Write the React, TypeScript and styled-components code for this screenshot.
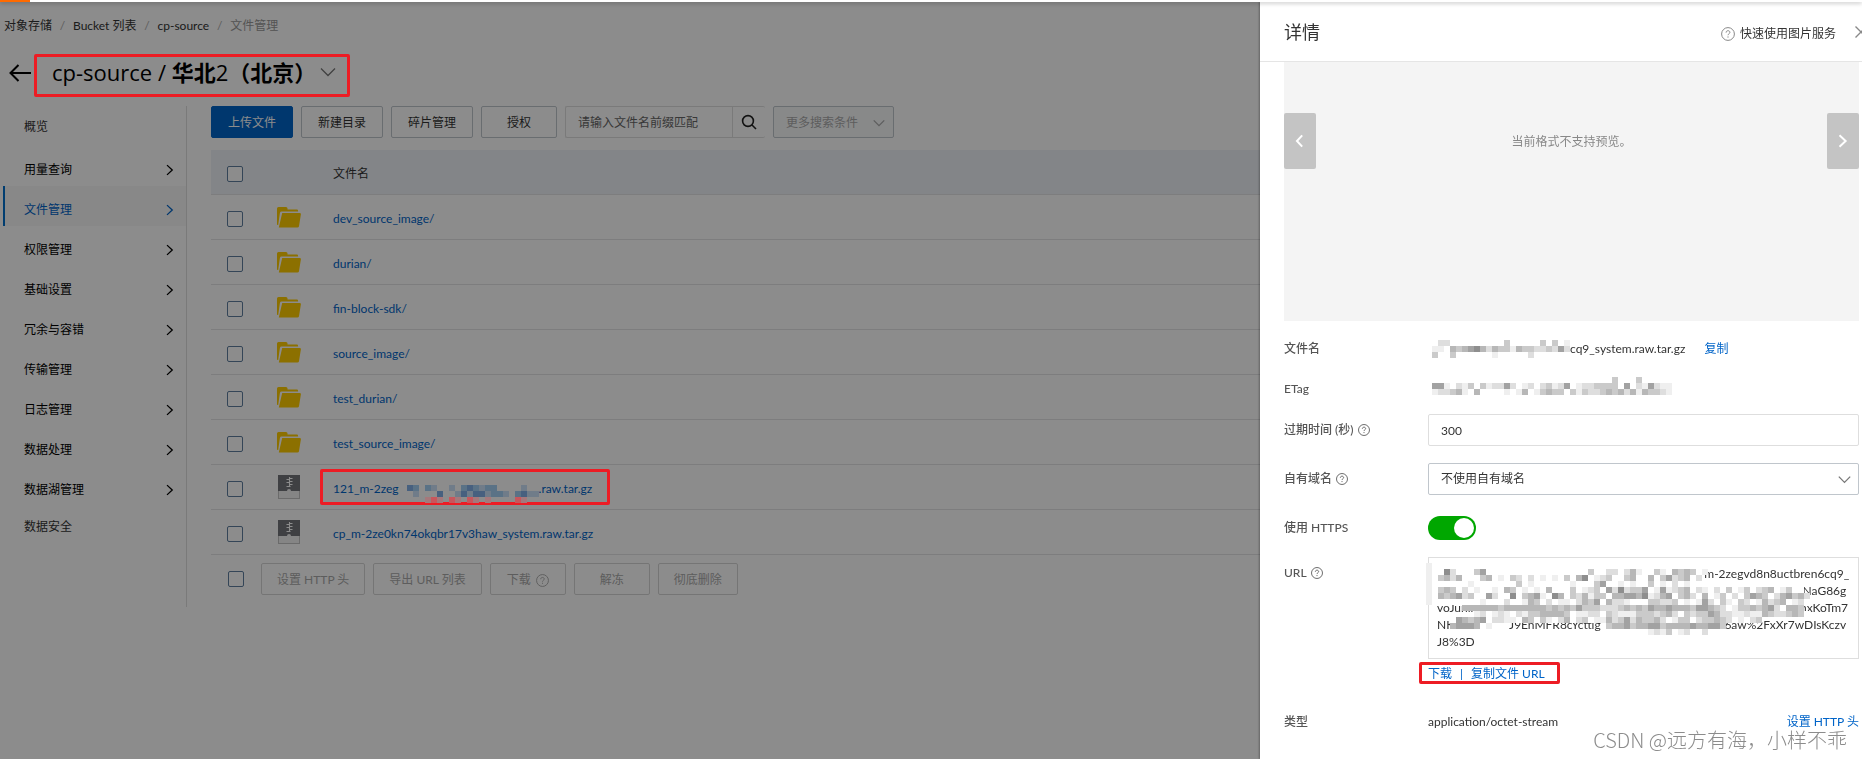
import React from "react";
import styled, { createGlobalStyle, css } from "styled-components";

const GlobalStyle = createGlobalStyle`
  * { box-sizing: border-box; }
  body {
    margin: 0;
    background: #fff;
    color: #333;
    font: 400 12px/20px Lato, "Noto Sans CJK SC", sans-serif;
    overflow: hidden;
  }
  button, input, select, textarea { font: inherit; color: inherit; margin: 0; }
  a { color: #0064c8; text-decoration: none; }
`;

/* ---------- icons ---------- */

type Dir = "down" | "left" | "right";
const chevronPaths: Record<Dir, string> = {
  down: "M1 4.5 8 11.5 15 4.5",
  left: "M10.5 1.5 4.5 8l6 6.5",
  right: "M4 1.5 11 8 4 14.5",
};

const Chevron = ({ dir, size = 12, weight = 1.3 }: { dir: Dir; size?: number; weight?: number }) => (
  <svg width={size} height={size} viewBox="0 0 16 16" fill="none" stroke="currentColor" strokeWidth={weight * (16 / size)}>
    <path d={chevronPaths[dir]} />
  </svg>
);

const HelpIcon = ({ size = 12 }: { size?: number }) => (
  <svg width={size} height={size} viewBox="0 0 14 14" fill="none" stroke="currentColor">
    <circle cx="7" cy="7" r="6.4" />
    <path d="M5.1 5.6c0-1.2.8-1.9 1.9-1.9s1.9.7 1.9 1.7c0 1.3-1.9 1.4-1.9 2.8" />
    <path d="M7 9.4v1.2" />
  </svg>
);

const BackIcon = () => (
  <svg width="22" height="18" viewBox="0 0 22 18" fill="none" stroke="#000" strokeWidth="2">
    <path d="M9.5 1 1.5 9l8 8M1.5 9H22" />
  </svg>
);

const SearchIcon = () => (
  <svg width="16" height="16" viewBox="0 0 16 16" fill="none" stroke="#222" strokeWidth="1.6">
    <circle cx="7" cy="7" r="5.4" />
    <path d="m11 11 4 4" />
  </svg>
);

const FolderIcon = () => (
  <svg width="24" height="21" viewBox="0 0 24 21" fill="#ffcc00">
    <path d="M0 1.5Q0 0 1.5 0H9q1.5 0 1.5 1.5V2.6h9.3q1.3 0 1.3 1.3V4.6H4.6Q3.2 4.6 2.9 6L1.2 18H.6Q0 18 0 17Z" />
    <path d="M5.2 5.9H22.6q1.5 0 1.3 1.4L22 19.2q-.2 1.4-1.6 1.4H1.8Z" />
  </svg>
);

const ArchiveIcon = () => (
  <svg width="24" height="24" viewBox="-1 0 24 24">
    <path fill="#c4c4c4" d="M0 0h22v24H0z" />
    <path fill="#73757a" d="M0 0h22v16H0z" />
    <path fill="#f2f2f2" d="M1 16h20v7H1z" />
    <path fill="#f2f2f2" d="M9 16a2 2 0 0 1 4 0z" />
    <path fill="none" stroke="#fff" strokeWidth="1.1" d="M11.5 2v10M8.5 4.5h3M11.5 3.5h3M11.5 6.5h3M8.5 7.5h3M11.5 9.5h3M8.5 11.5h4" />
  </svg>
);

const CloseIcon = () => (
  <svg width="14" height="14" viewBox="0 0 14 14" fill="none" stroke="#888" strokeWidth="1.4">
    <path d="m1.5 1.5 11 11m0-11-11 11" />
  </svg>
);

/* ---------- mosaic that hides private text ---------- */

const CELL = 6;
const shades: Record<string, string> = {
  "0": "#ffffff", "1": "#efefef", "2": "#dedede", "3": "#cacaca", "4": "#b7b7b7", "5": "#a2a2a2", "6": "#8e8e8e",
  a: "#47607f", b: "#707c89", e: "#5a7286", d: "#c8565c", g: "#a5787b",
};

const Mosaic = ({ rows, className }: { rows: string[]; className?: string }) => {
  const width = Math.max(...rows.map((r) => r.length)) * CELL;
  const height = rows.length * CELL;
  return (
    <svg className={className} width={width} height={height} shapeRendering="crispEdges" aria-hidden="true">
      {rows.flatMap((row, y) =>
        [...row].map((c, x) =>
          shades[c] ? <rect key={`${x}-${y}`} x={x * CELL} y={y * CELL} width={CELL} height={CELL} fill={shades[c]} /> : null
        )
      )}
    </svg>
  );
};

const linkMosaic = [
  "ae.eb..b.eaebee....b",
  ".b...a..babaabeeb.eabb",
  "...gdg.dg.dg.g....dg",
];
const nameMosaic = [
  ".22.........3.....3.3.1",
  "11.43456424331433223252",
  "3..3......1.....2......",
];
const etagMosaic = [
  "..............................3...3......",
  "551.213.312252.12.23125.1223333.5.215211",
  "122341.4....1.14.13433.31322343424143321",
  "",
];
const urlMosaic = [
  "1",
  "10062000350000000000000000030022024100310434301",
  "1034240003401032020101030460123003400403523402",
  "1000000100000003010000001000350010100301020100",
  "103430201001043010104000301230526233501512340210203013023401300",
  "1043452300520060345106403241330445546124503420401302035430245342",
  "1000000001000200143020110243504221000332230101520310320142340120",
  "......444444344444443434353332223434354454443554320133434520443",
  "........12012102133444430112203211133323420323354221121143223430",
  "....0543450221104303102402301142352433420133023343201023",
  "....45554.1...................34453445534444544553",
  ".....................................1213012..2",
];

/* ---------- red marker frames ---------- */

const marked = css`
  position: relative;
  &::after {
    content: "";
    position: absolute;
    z-index: 2;
    border: 3px solid #ed1c24;
    border-radius: 2px;
    pointer-events: none;
  }
`;

/* ---------- page ---------- */

const TopStrip = styled.div`
  position: relative;
  z-index: 4;
  height: 2px;
  background: linear-gradient(90deg, #ff6a00 30px, #fff 30px);
  box-shadow: 0 1px 4px rgba(0, 0, 0, 0.35);
`;

const Mask = styled.div`
  position: fixed;
  inset: 0;
  z-index: 1;
  background: rgba(0, 0, 0, 0.45);
`;

const Breadcrumb = styled.nav`
  display: flex;
  padding: 14px 4px 0;
  a { color: #333; }
`;
const Slash = styled.span`
  width: 21px;
  text-align: center;
  color: #aaa;
`;
const Current = styled.span`color: #999;`;

const TitleBar = styled.header`
  display: flex;
  align-items: center;
  margin-top: 18px;
  padding-left: 9px;
`;
const BackButton = styled.button`
  display: flex;
  padding: 0 0 6px;
  border: 0;
  background: none;
`;
const BucketSwitch = styled.div`
  ${marked}
  display: flex;
  align-items: center;
  gap: 4px;
  height: 43px;
  margin-left: 3px;
  padding: 0 14px 8px 18px;
  color: #777;
  &::after { inset: 0; }
`;
const Title = styled.h1`
  margin: 0;
  color: #000;
  font: 500 22px/32px "Open Sans", "Noto Sans CJK SC", sans-serif;
  b { font-weight: 700; }
`;

const Body = styled.div`
  display: flex;
  align-items: flex-start;
  margin-top: 9px;
`;

const Sidebar = styled.nav`
  flex: none;
  width: 187px;
  padding: 0 0 61px 3px;
  border-right: 1px solid #dedede;
`;
const SideItem = styled.a<{ $sub?: boolean; $active?: boolean }>`
  display: flex;
  align-items: center;
  justify-content: space-between;
  height: 40px;
  padding: ${(p) => (p.$sub ? "7px 10px 0 19px" : "2px 10px 0 21px")};
  border-left: ${(p) => (p.$sub ? "2px solid transparent" : "0")};
  color: ${(p) => (p.$sub ? "#000" : "#333")};
  ${(p) => p.$active && css`
    color: #0064c8;
    background: #f7f7f7;
    border-left-color: #0070cc;
  `}
`;

const Content = styled.main`
  flex: 1;
  min-width: 0;
  padding-left: 24px;
`;

const Toolbar = styled.div`
  display: flex;
  gap: 8px;
`;
const Button = styled.button<{ $primary?: boolean }>`
  display: flex;
  align-items: center;
  justify-content: center;
  gap: 5px;
  height: 32px;
  min-width: 76px;
  padding: 2px 16px 0;
  border: 1px solid #c0c6cc;
  border-radius: 2px;
  background: #fff;
  white-space: nowrap;
  ${(p) => p.$primary && css`
    background: #0064c8;
    border-color: #0064c8;
    color: #fff;
  `}
  &:disabled { color: #aaa; border-color: #d6d6d6; }
`;
const SearchBox = styled.form`
  display: flex;
  width: 200px;
  height: 32px;
  border: 1px solid #dedede;
  border-right: 0;
  border-radius: 2px;
  input {
    flex: 1;
    min-width: 0;
    padding: 2px 12px 0;
    border: 0;
    background: none;
  }
  input::placeholder { color: #666; opacity: 1; }
  button {
    width: 33px;
    padding: 0;
    border: 0;
    border-left: 1px solid #dedede;
    background: none;
  }
  svg { display: block; margin: auto; }
`;
const FilterButton = styled(Button)`
  justify-content: space-between;
  width: 121px;
  padding: 2px 8px 0 12px;
  &:disabled { border-color: #c0c6cc; background: #f7f9fa; }
`;

const Table = styled.table`
  width: 100%;
  margin-top: 12px;
  border-collapse: separate;
  border-spacing: 0;
  table-layout: fixed;
  th, td {
    height: 45px;
    padding: 4px 0 0;
    border-bottom: 1px solid #e3e4e6;
    text-align: left;
    font-weight: 400;
    vertical-align: middle;
  }
  td:nth-child(2) { padding: 0; }
  th { background: #eff3f8; }
  svg { display: block; }
`;
const CheckCell = styled.col`width: 66px;`;
const IconCell = styled.col`width: 56px;`;
const Check = styled.input.attrs({ type: "checkbox" })`
  appearance: none;
  display: block;
  flex: none;
  width: 16px;
  height: 16px;
  margin-left: 16px;
  border: 1px solid #5f7f9f;
  border-radius: 2px;
  background: #fff;
`;
const FileLink = styled.a<{ $marked?: boolean }>`
  display: flex;
  align-items: center;
  width: fit-content;
  height: 20px;
  ${(p) => p.$marked && css`
    ${marked}
    &::after { inset: -10px -18px -6px -13px; }
  `}
`;
const LinkMosaic = styled(Mosaic)`
  position: relative;
  z-index: 3;
  margin: 10px 0 0 8px;
`;
const BatchBar = styled.div`
  display: flex;
  align-items: center;
  gap: 8px;
  padding: 8px 0 0 1px;
`;
const BatchCheck = styled(Check)`margin-right: 9px;`;
const BatchButton = styled(Button)`padding: 2px 15px 0;`;

/* ---------- drawer ---------- */

const Drawer = styled.aside`
  position: fixed;
  top: 2px;
  right: -8px;
  bottom: 0;
  z-index: 3;
  width: 610px;
  background: #fff;
  box-shadow: -1px 0 2px rgba(0, 0, 0, 0.3);
`;
const DrawerHead = styled.header`
  display: flex;
  align-items: center;
  height: 60px;
  padding-left: 24px;
  border-bottom: 1px solid #e5e5e5;
`;
const DrawerTitle = styled.h2`
  flex: 1;
  margin: 0;
  font-size: 18px;
  line-height: 24px;
  font-weight: 400;
`;
const HelpLink = styled.a`
  display: flex;
  align-items: center;
  gap: 5px;
  padding-top: 4px;
  color: #333;
  svg { color: #888; }
`;
const CloseButton = styled.button`
  display: flex;
  margin-left: 18px;
  padding: 0 2px 0 0;
  border: 0;
  background: none;
`;
const DrawerBody = styled.div`padding: 0 11px 0 24px;`;
const Preview = styled.div`
  display: flex;
  align-items: flex-start;
  justify-content: space-between;
  height: 259px;
  padding-top: 51px;
  background: #f4f4f4;
  color: #888;
`;
const PageButton = styled.button`
  display: flex;
  align-items: center;
  justify-content: center;
  width: 32px;
  height: 56px;
  padding: 0;
  border: 0;
  border-radius: 2px;
  background: #c4c4c4;
  color: #fff;
`;
const PreviewNote = styled.p`
  margin: 0;
  line-height: 58px;
`;
const Details = styled.div`padding-top: 8px;`;
const Field = styled.div<{ $height?: number; $after?: number; $top?: boolean }>`
  display: grid;
  grid-template-columns: 144px 1fr;
  align-items: ${(p) => (p.$top ? "start" : "center")};
  min-height: ${(p) => p.$height ?? 32}px;
  margin-bottom: ${(p) => p.$after ?? 0}px;
`;
const Label = styled.label`
  display: flex;
  align-items: center;
  gap: 4px;
  min-height: 32px;
  color: #555;
  font-weight: 500;
`;
const Value = styled.div`
  display: flex;
  align-items: center;
`;
const MaskedValue = styled(Value)`padding-left: 4px;`;
const CopyLink = styled.a`margin-left: 19px;`;
const TextInput = styled.input`
  width: 100%;
  height: 32px;
  padding: 0 12px;
  border: 1px solid #dedede;
  border-radius: 2px;
`;
const SelectBox = styled.div`
  position: relative;
  color: #777;
  select {
    appearance: none;
    width: 100%;
    height: 32px;
    padding: 0 12px;
    border: 1px solid #c0c6cc;
    border-radius: 2px;
    background: #fff;
    color: #333;
  }
  svg {
    position: absolute;
    top: 10px;
    right: 8px;
    pointer-events: none;
  }
`;
const Switch = styled.input.attrs({ type: "checkbox", role: "switch" })`
  appearance: none;
  display: flex;
  justify-content: flex-end;
  width: 48px;
  height: 24px;
  padding: 2px;
  border-radius: 12px;
  background: #00a700;
  &::before {
    content: "";
    width: 20px;
    height: 20px;
    border-radius: 50%;
    background: #fff;
  }
`;
const UrlBox = styled.div`
  position: relative;
  height: 102px;
`;
const UrlText = styled.textarea`
  display: block;
  width: 100%;
  height: 102px;
  padding: 7px 8px;
  border: 1px solid #dedede;
  line-height: 17px;
  white-space: pre;
  overflow: hidden;
  resize: none;
`;
const UrlMosaic = styled(Mosaic)`
  position: absolute;
  top: 6px;
  left: -2px;
`;
const UrlActions = styled.div`
  ${marked}
  display: inline-flex;
  gap: 8px;
  margin-top: 5px;
  color: #0064c8;
  &::after { inset: -2px -15px 0 -9px; }
`;
const TypeValue = styled(Value)`justify-content: space-between;`;
const Watermark = styled.p`
  position: fixed;
  right: 15px;
  bottom: 5px;
  z-index: 5;
  margin: 0;
  color: #8c8c8c;
  font: 300 20px/28px "Noto Sans CJK SC", sans-serif;
`;

/* ---------- data ---------- */

const sections = ["用量查询", "文件管理", "权限管理", "基础设置", "冗余与容错", "传输管理", "日志管理", "数据处理", "数据湖管理"];
const folders = ["dev_source_image/", "durian/", "fin-block-sdk/", "source_image/", "test_durian/", "test_source_image/"];

const gap = (n: number) => " ".repeat(n);
const urlValue = [
  gap(87) + "m-2zegvd8n8uctbren6cq9_",
  gap(119) + "NaG86g",
  "voJunim" + gap(104) + "nxKoTm7",
  "NK" + gap(18) + "J9EnMFR8cYcttlg" + gap(38) + "16aw%2FxXr7wDIsKczv",
  "J8%3D",
].join("\n");

export default function App() {
  return (
    <>
      <GlobalStyle />
      <TopStrip />
      <Breadcrumb>
        <a href="#oss">对象存储</a>
        <Slash>/</Slash>
        <a href="#buckets">Bucket 列表</a>
        <Slash>/</Slash>
        <a href="#cp-source">cp-source</a>
        <Slash>/</Slash>
        <Current>文件管理</Current>
      </Breadcrumb>
      <TitleBar>
        <BackButton aria-label="返回"><BackIcon /></BackButton>
        <BucketSwitch>
          <Title>cp-source / <b>华北</b>2<b>（北京）</b></Title>
          <Chevron dir="down" size={16} />
        </BucketSwitch>
      </TitleBar>

      <Body>
        <Sidebar>
          <SideItem href="#overview">概览</SideItem>
          {sections.map((name) => (
            <SideItem key={name} href="#section" $sub $active={name === "文件管理"}>
              {name}
              <Chevron dir="right" />
            </SideItem>
          ))}
          <SideItem href="#security">数据安全</SideItem>
        </Sidebar>

        <Content>
          <Toolbar>
            <Button $primary>上传文件</Button>
            <Button>新建目录</Button>
            <Button>碎片管理</Button>
            <Button>授权</Button>
            <SearchBox>
              <input aria-label="搜索文件" placeholder="请输入文件名前缀匹配" />
              <button type="button" aria-label="搜索"><SearchIcon /></button>
            </SearchBox>
            <FilterButton disabled>
              更多搜索条件
              <Chevron dir="down" />
            </FilterButton>
          </Toolbar>

          <Table>
            <colgroup>
              <CheckCell />
              <IconCell />
              <col />
            </colgroup>
            <thead>
              <tr>
                <th><Check aria-label="全选" /></th>
                <th />
                <th>文件名</th>
              </tr>
            </thead>
            <tbody>
              {folders.map((name) => (
                <tr key={name}>
                  <td><Check aria-label={name} /></td>
                  <td><FolderIcon /></td>
                  <td><FileLink href="#folder">{name}</FileLink></td>
                </tr>
              ))}
              <tr>
                <td><Check aria-label="121_m-2zeg" /></td>
                <td><ArchiveIcon /></td>
                <td>
                  <FileLink href="#file" $marked>
                    121_m-2zeg<LinkMosaic rows={linkMosaic} />.raw.tar.gz
                  </FileLink>
                </td>
              </tr>
              <tr>
                <td><Check aria-label="cp_m-2ze0kn74okqbr17v3haw" /></td>
                <td><ArchiveIcon /></td>
                <td><FileLink href="#file">cp_m-2ze0kn74okqbr17v3haw_system.raw.tar.gz</FileLink></td>
              </tr>
            </tbody>
          </Table>
          <BatchBar>
            <BatchCheck aria-label="选择全部文件" />
            <BatchButton disabled>设置 HTTP 头</BatchButton>
            <BatchButton disabled>导出 URL 列表</BatchButton>
            <BatchButton disabled>下载 <HelpIcon size={13} /></BatchButton>
            <BatchButton disabled>解冻</BatchButton>
            <BatchButton disabled>彻底删除</BatchButton>
          </BatchBar>
        </Content>
      </Body>

      <Mask />

      <Drawer>
        <DrawerHead>
          <DrawerTitle>详情</DrawerTitle>
          <HelpLink href="#image-service"><HelpIcon size={14} />快速使用图片服务</HelpLink>
          <CloseButton aria-label="关闭"><CloseIcon /></CloseButton>
        </DrawerHead>
        <DrawerBody>
          <Preview>
            <PageButton aria-label="上一个"><Chevron dir="left" size={14} weight={2} /></PageButton>
            <PreviewNote>当前格式不支持预览。</PreviewNote>
            <PageButton aria-label="下一个"><Chevron dir="right" size={14} weight={2} /></PageButton>
          </Preview>
          <Details>
            <Field $height={40}>
              <Label as="span">文件名</Label>
              <MaskedValue>
                <Mosaic rows={nameMosaic} />
                cq9_system.raw.tar.gz
                <CopyLink href="#copy">复制</CopyLink>
              </MaskedValue>
            </Field>
            <Field $height={40} $after={5}>
              <Label as="span">ETag</Label>
              <MaskedValue><Mosaic rows={etagMosaic} /></MaskedValue>
            </Field>
            <Field $after={17}>
              <Label htmlFor="expire">过期时间 (秒) <HelpIcon /></Label>
              <TextInput id="expire" defaultValue="300" />
            </Field>
            <Field $after={17}>
              <Label htmlFor="domain">自有域名 <HelpIcon /></Label>
              <SelectBox>
                <select id="domain"><option>不使用自有域名</option></select>
                <Chevron dir="down" size={13} />
              </SelectBox>
            </Field>
            <Field $after={13}>
              <Label htmlFor="https">使用 HTTPS</Label>
              <Switch id="https" defaultChecked />
            </Field>
            <Field $top $after={22}>
              <Label htmlFor="url">URL <HelpIcon /></Label>
              <div>
                <UrlBox>
                  <UrlText id="url" readOnly value={urlValue} />
                  <UrlMosaic rows={urlMosaic} />
                </UrlBox>
                <UrlActions>
                  <a href="#download">下载</a>
                  <span>|</span>
                  <a href="#copy-url">复制文件 URL</a>
                </UrlActions>
              </div>
            </Field>
            <Field>
              <Label as="span">类型</Label>
              <TypeValue>
                application/octet-stream
                <a href="#http-header">设置 HTTP 头</a>
              </TypeValue>
            </Field>
          </Details>
        </DrawerBody>
      </Drawer>
      <Watermark>CSDN @远方有海，小样不乖</Watermark>
    </>
  );
}
